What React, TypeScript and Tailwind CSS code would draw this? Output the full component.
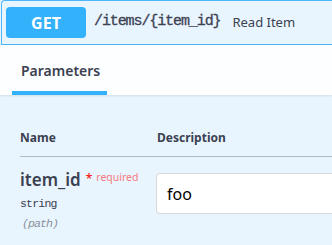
export default function App() {
  return (
    <div className="w-[332px] h-[245px] overflow-hidden bg-[#e9f5fe] text-[#3b4151]" style={{ fontFamily: '"Noto Sans", "Open Sans", sans-serif' }}>
      <div className="h-[45px] flex items-center border-t border-l border-b border-[#4db5fa] rounded-tl-[4px] ml-[1px] pl-[4px] bg-[#e9f5fe]">
        <div className="w-[80px] h-[31px] rounded-[4px] bg-[#33b1fb] text-white font-bold text-[16px] flex items-center justify-center">GET</div>
        <span className="ml-[8px] text-[15px] tracking-[-1.1px] text-[#3b4151]" style={{ fontFamily: '"Liberation Mono", monospace', WebkitTextStroke: '0.3px #3b4151' }}>/items/{'{'}item_id{'}'}</span>
        <span className="ml-[12px] text-[13px] text-[#3b4151]">Read Item</span>
      </div>
      <div className="h-[50px] bg-white/90 shadow-[0_1px_2px_rgba(0,0,0,0.1)] pl-[12px] flex flex-col justify-end">
        <div className="w-[95px] flex flex-col">
          <span className="pl-[9px] text-[14px] font-semibold text-[#3b4151] leading-[20px] mb-[10px]">Parameters</span>
          <div className="h-[4px] bg-[#33b1fb]"></div>
        </div>
      </div>
      <div className="pl-[20px] pt-[31px]">
        <div className="flex text-[12px] font-bold text-[#3b4151] h-[23px] items-center">
          <span className="w-[137px]">Name</span>
          <span>Description</span>
        </div>
        <div className="h-[1px] bg-[#b3b9c3] mt-[7px]"></div>
        <div className="flex mt-[12px]">
          <div className="w-[136px]">
            <div className="flex items-start">
              <span className="text-[17px] font-semibold leading-[22px]">item_id</span>
              <span className="text-[#ff0000] text-[12px] ml-[5px] leading-[14px] mt-[3px]">*</span>
              <span className="text-[#f77a80] text-[10.5px] ml-[4px] leading-[14px] mt-[1px]">required</span>
            </div>
            <div className="text-[11.5px] tracking-[-0.8px] mt-[5px] leading-[16px] text-[#3b4151]" style={{ fontFamily: '"Liberation Mono", monospace' }}>string</div>
            <div className="text-[11.5px] tracking-[-0.9px] italic mt-[4px] leading-[16px] text-[#8a8f99] ml-[2px]" style={{ fontFamily: '"Liberation Mono", monospace' }}>(path)</div>
          </div>
          <div className="flex-1 mt-[4px]">
            <div className="h-[41px] bg-white border border-[#d9d9d9] rounded-l-[4px] border-r-0 flex items-center pl-[10px] text-[16px] text-black">foo</div>
          </div>
        </div>
      </div>
    </div>
  );
}
